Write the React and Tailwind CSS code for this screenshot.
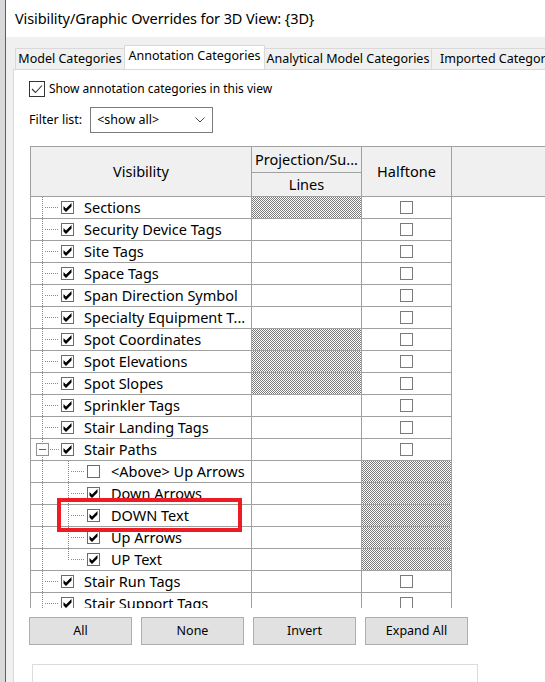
import React from 'react';

const rows = [
  { label: 'Sections', lines: true },
  { label: 'Security Device Tags' },
  { label: 'Site Tags' },
  { label: 'Space Tags' },
  { label: 'Span Direction Symbol' },
  { label: 'Specialty Equipment T...' },
  { label: 'Spot Coordinates', lines: true },
  { label: 'Spot Elevations', lines: true },
  { label: 'Spot Slopes', lines: true },
  { label: 'Sprinkler Tags' },
  { label: 'Stair Landing Tags' },
  { label: 'Stair Paths', expander: true },
  { label: '<Above> Up Arrows', child: true, off: true },
  { label: 'Down Arrows', child: true },
  { label: 'DOWN Text', child: true },
  { label: 'Up Arrows', child: true },
  { label: 'UP Text', child: true, last: true },
  { label: 'Stair Run Tags' },
  { label: 'Stair Support Tags' },
];

const hatch =
  'bg-[image:repeating-conic-gradient(#7a7a7a_0%_25%,#ffffff_0%_50%)] bg-[length:2px_2px]';

const TreeLines = ({ row }) => {
  const dot = { stroke: '#8a8a8a', strokeWidth: 1, strokeDasharray: '1 1', shapeRendering: 'crispEdges' };
  if (row.child) {
    return (
      <svg width="56" height="21" className="shrink-0">
        <line x1="11.5" y1="0" x2="11.5" y2="21" style={dot} />
        <line x1="37.5" y1="0" x2="37.5" y2={row.last ? 11 : 21} style={dot} />
        <line x1="40" y1="10.5" x2="54" y2="10.5" style={dot} />
      </svg>
    );
  }
  return (
    <svg width="30" height="21" className="shrink-0">
      <line x1="11.5" y1="0" x2="11.5" y2="21" style={dot} />
      {row.expander ? (
        <>
          <line x1="19" y1="10.5" x2="28" y2="10.5" style={dot} />
          <line x1="37.5" y1="18" x2="37.5" y2="21" style={dot} />
          <rect x="5.5" y="4.5" width="12" height="12" fill="#fff" stroke="#919191" />
          <line x1="8" y1="10.5" x2="15" y2="10.5" stroke="#2f64c0" strokeWidth="1" shapeRendering="crispEdges" />
        </>
      ) : (
        <line x1="14" y1="10.5" x2="28" y2="10.5" style={dot} />
      )}
    </svg>
  );
};

const TreeCheck = ({ on }) => (
  <svg width="13" height="13" className="shrink-0">
    <rect x="0.5" y="0.5" width="12" height="12" fill="#fff" stroke="#6b6b6b" shapeRendering="crispEdges" />
    {on && <polygon points="2.5,5 5,7.5 10.5,2 10.5,5.5 5,11 2.5,8.5" fill="#000" />}
  </svg>
);

const HalftoneBox = () => (
  <div className="w-[13px] h-[13px] border border-[#7a7a7a] bg-white" />
);

export default function App() {
  return (
    <div
      className="w-[545px] h-[682px] overflow-hidden flex bg-white text-black relative"
      style={{ fontFamily: '"Noto Sans", "Open Sans", sans-serif' }}
    >
      {/* window behind */}
      <div className="w-[5px] shrink-0 bg-[#d9d9d9] border-r border-[#5e5e5e] box-content" />

      <div className="flex-1 min-w-0 flex flex-col">
        <div className="h-[37px] shrink-0 bg-white flex items-center pl-[9px] text-[14.5px] leading-none tracking-[-0.1px]">
          Visibility/Graphic Overrides for 3D View: {'{3D}'}
        </div>

        <div className="flex-1 flex flex-col bg-[#f0f0f0] pl-[7px] pt-[8px]">
          {/* tabs */}
          <div className="flex items-end h-[24px] relative z-10 text-[12.5px] leading-none whitespace-nowrap">
            <div className="ml-[2px] w-[110px] h-[21px] shrink-0 flex items-center justify-center border border-b-0 border-[#d9d9d9] bg-[#f0f0f0]">
              Model Categories
            </div>
            <div className="w-[141px] h-[24px] shrink-0 flex items-start pt-[4px] justify-center border border-b-0 border-[#d9d9d9] bg-white -ml-px">
              Annotation Categories
            </div>
            <div className="w-[168px] h-[21px] shrink-0 flex items-center justify-center border border-b-0 border-[#d9d9d9] bg-[#f0f0f0] -ml-px">
              Analytical Model Categories
            </div>
            <div className="w-[140px] h-[21px] shrink-0 flex items-center pl-[8px] border border-b-0 border-[#d9d9d9] bg-[#f0f0f0] -ml-px">
              Imported Categories
            </div>
          </div>

          {/* tab panel */}
          <div className="flex-1 flex flex-col bg-white border-l border-t border-[#d9d9d9] pl-[15px]">
            <div className="mt-[11px] flex items-center h-[16px] text-[12px] leading-none">
              <div className="w-[16px] h-[16px] border border-[#333] bg-white flex items-center justify-center">
                <svg width="12" height="10" viewBox="0 0 12 10">
                  <path d="M1 5 L4.5 8.5 L11 1.5" fill="none" stroke="#333" strokeWidth="1.1" />
                </svg>
              </div>
              <span className="ml-[4px]">Show annotation categories in this view</span>
            </div>

            <div className="mt-[10px] flex items-center h-[26px] text-[12.5px] leading-none">
              <span>Filter list:</span>
              <div className="ml-[8px] w-[123px] h-[26px] border border-[#7a7a7a] bg-white flex items-center pl-[6px] pr-[7px]">
                <span className="flex-1">&lt;show all&gt;</span>
                <svg width="10" height="6" viewBox="0 0 10 6">
                  <path d="M0.5 0.5 L5 5 L9.5 0.5" fill="none" stroke="#444" strokeWidth="1" />
                </svg>
              </div>
            </div>

            {/* grid */}
            <div className="mt-[13px] ml-[1px] w-[560px] h-[462px] shrink-0 overflow-hidden border-t border-l border-[#a0a0a0] text-[14.5px] leading-none">
              <div className="flex h-[50px] bg-[#f0f0f0] border-b border-[#a0a0a0]">
                <div className="w-[221px] border-r border-[#a0a0a0] flex items-center justify-center">Visibility</div>
                <div className="w-[110px] border-r border-[#a0a0a0] flex flex-col">
                  <div className="h-[26px] border-b border-[#a0a0a0] flex items-center justify-center whitespace-nowrap">
                    Projection/Su...
                  </div>
                  <div className="flex-1 flex items-center justify-center">Lines</div>
                </div>
                <div className="w-[90px] border-r border-[#a0a0a0] flex items-center justify-center">Halftone</div>
                <div className="flex-1" />
              </div>

              {rows.map((row, i) => (
                <div key={i} className="flex h-[22px]">
                  <div className="w-[221px] border-r border-b border-[#a0a0a0] flex items-start">
                    <TreeLines row={row} />
                    <div className="h-[21px] flex items-center">
                      <TreeCheck on={!row.off} />
                    </div>
                    <div className={`h-[21px] flex items-center whitespace-nowrap ${row.child ? 'ml-[11px]' : 'ml-[10px]'}`}>
                      {row.label}
                    </div>
                  </div>
                  <div className={`w-[110px] border-r border-b border-[#a0a0a0] ${row.lines ? hatch : ''}`} />
                  <div
                    className={`w-[90px] border-r border-b border-[#a0a0a0] flex items-center justify-center ${
                      row.child ? hatch : ''
                    }`}
                  >
                    {!row.child && <HalftoneBox />}
                  </div>
                  <div className="flex-1" />
                </div>
              ))}
            </div>

            {/* buttons */}
            <div className="mt-[9px] flex gap-[9px] text-[12.5px] leading-none">
              {['All', 'None', 'Invert', 'Expand All'].map((b) => (
                <div
                  key={b}
                  className="w-[103px] h-[28px] bg-[#e1e1e1] border border-[#adadad] flex items-center justify-center"
                >
                  {b}
                </div>
              ))}
            </div>

            <div className="mt-[19px] ml-[3px] w-[446px] flex-1 border-l border-t border-r border-[#dcdcdc] bg-white" />
          </div>
        </div>
      </div>

      {/* annotation highlight */}
      <div className="absolute left-[57px] top-[498px] w-[185px] h-[34px] border-[4px] border-[#ed1c24]" />
    </div>
  );
}
